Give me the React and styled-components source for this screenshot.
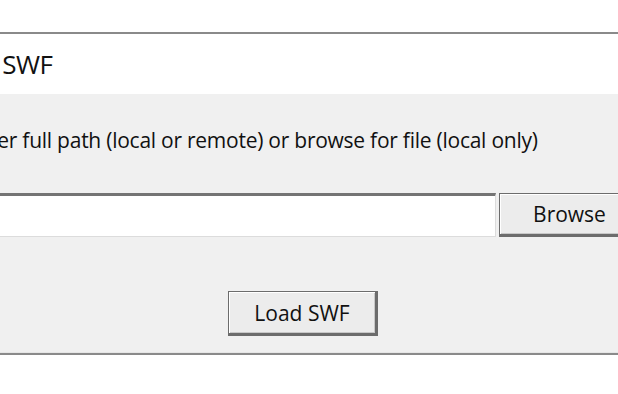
import React from 'react';
import styled, { createGlobalStyle } from 'styled-components';

const GlobalStyle = createGlobalStyle`
  html, body {
    margin: 0;
    padding: 0;
    background: #ffffff;
    overflow: hidden;
  }
  body {
    font-family: 'Open Sans', 'Liberation Sans', sans-serif;
    color: #111111;
  }
`;

const Screen = styled.div`
  width: 618px;
  height: 394px;
  padding-top: 32px;
  box-sizing: border-box;
  overflow: hidden;
`;

const Dialog = styled.div`
  width: 746px;
  margin-left: -70px;
  border-top: 2px solid #8a8a8a;
  border-bottom: 2px solid #8a8a8a;
`;

const Header = styled.div`
  height: 60px;
  background: #ffffff;
  display: flex;
  align-items: center;
  padding-left: 9px;
  font-size: 26px;
  letter-spacing: -0.6px;
`;

const Body = styled.div`
  background: #f0f0f0;
  padding: 32px 34px 16px 34px;
  border-bottom: 1px solid #e6e6e6;
`;

const Prompt = styled.div`
  font-size: 21px;
  line-height: 28px;
  letter-spacing: -0.25px;
  white-space: nowrap;
  margin-left: 2px;
`;

const PathRow = styled.div`
  display: flex;
  gap: 3px;
  margin-top: 39px;
`;

const PathInput = styled.input`
  flex: 1;
  height: 44px;
  box-sizing: border-box;
  background: #ffffff;
  border-top: 3px solid #747474;
  border-left: 3px solid #747474;
  border-right: 1px solid #dcdcdc;
  border-bottom: 1px solid #dcdcdc;
  outline: none;
  font-family: inherit;
  font-size: 21px;
`;

const Button = styled.button`
  width: ${(p) => p.$width}px;
  height: ${(p) => p.$height}px;
  box-sizing: border-box;
  background: #ececec;
  border-style: solid;
  border-color: #6c6c6c;
  border-width: 1px 3px 3px 1px;
  box-shadow: inset 1px 1px 0 #ffffff, inset -1px -1px 0 #c8c8c8;
  font-family: inherit;
  font-size: 21px;
  color: #111111;
  padding: 0;
`;

const Footer = styled.div`
  display: flex;
  justify-content: center;
  margin-top: 54px;
`;

export default function App() {
  return (
    <>
      <GlobalStyle />
      <Screen>
        <Dialog>
          <Header>Load SWF</Header>
          <Body>
            <Prompt>Enter full path (local or remote) or browse for file (local only)</Prompt>
            <PathRow>
              <PathInput type="text" />
              <Button $width={143} $height={44}>Browse</Button>
            </PathRow>
            <Footer>
              <Button $width={150} $height={45}>Load SWF</Button>
            </Footer>
          </Body>
        </Dialog>
      </Screen>
    </>
  );
}
